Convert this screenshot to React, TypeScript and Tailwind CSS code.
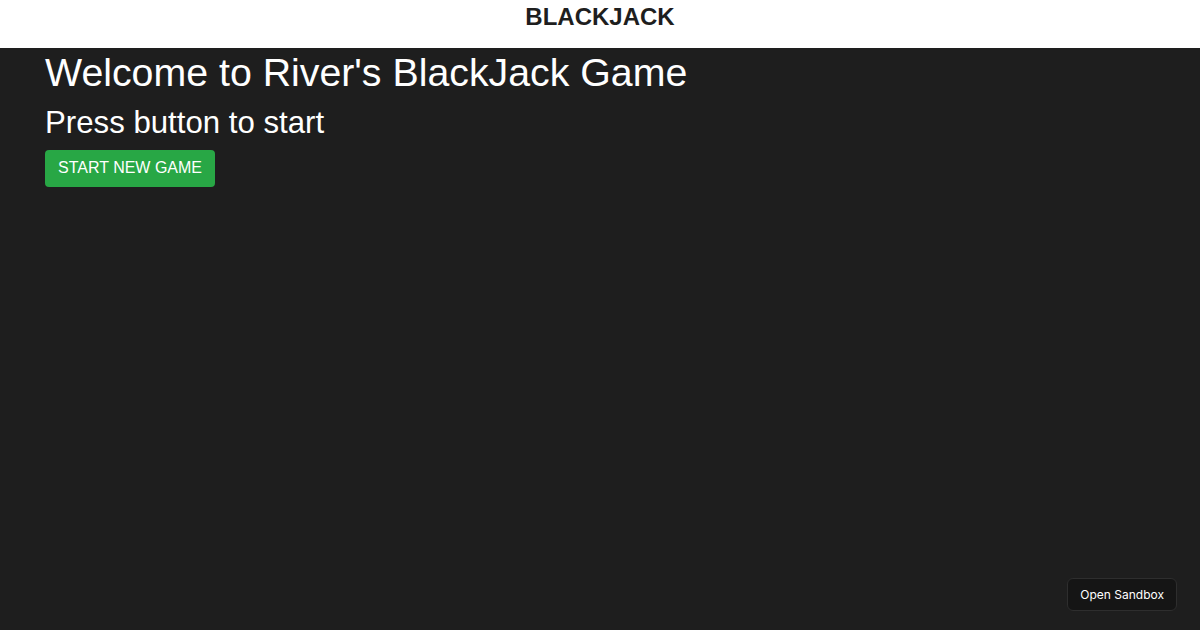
export default function App() {
  return (
    <div className="min-h-screen bg-[#1e1e1e] font-['Liberation_Sans',Arial,sans-serif]">
      {/* Header */}
      <header className="h-12 bg-white flex justify-center pt-[4px]">
        <h2 className="text-[24px] font-bold text-[#1e1e1e] leading-[26px]">BLACKJACK</h2>
      </header>

      {/* Game area */}
      <main className="px-[45px] pt-px">
        <h1 className="text-[39.3px] leading-[1.2] text-white">Welcome to River's BlackJack Game</h1>
        <h3 className="text-[31.2px] leading-[1.2] text-white mt-[8px]">Press button to start</h3>
        <button className="mt-2 h-[37px] px-[13px] rounded bg-[#28a745] text-white text-base">
          START NEW GAME
        </button>
      </main>

      <button className="fixed right-[23px] bottom-[19px] h-[33px] px-3 rounded-md bg-[#151515] border border-[#2e2e2e] text-[12px] text-white font-['Inter',sans-serif]">
        Open Sandbox
      </button>
    </div>
  )
}
